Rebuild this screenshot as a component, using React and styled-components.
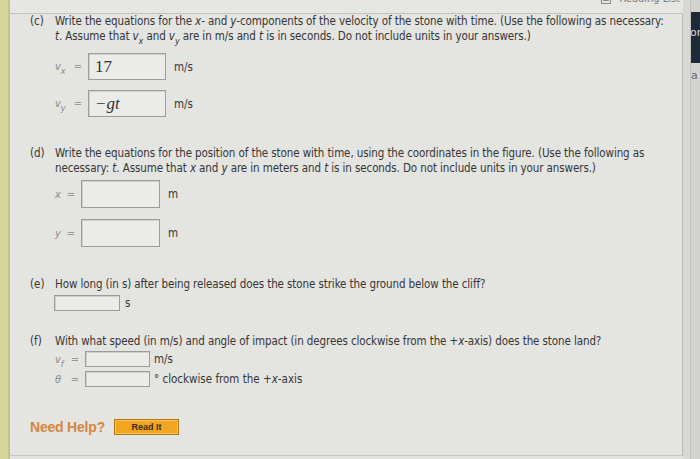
import React from "react";
import styled, { createGlobalStyle } from "styled-components";

const Global = createGlobalStyle`
  html, body { margin: 0; padding: 0; background: #e2e2df; }
  #root { width: 700px; height: 459px; }
`;

const Page = styled.div`
  display: flex;
  width: 700px;
  height: 459px;
  overflow: hidden;
  background: #e2e2df;
  font-family: "DejaVu Sans Condensed", "DejaVu Sans", sans-serif;
  color: #363636;
`;

const LeftStrip = styled.div`
  flex: none;
  width: 8px;
  background: #d6d59a;
  border-right: 2px solid #c4c389;
`;

const Center = styled.div`
  flex: none;
  width: 673px;
  display: flex;
  flex-direction: column;
  padding-bottom: 3px;
`;

const TopBar = styled.div`
  flex: none;
  height: 13px;
  overflow: hidden;
  display: flex;
  justify-content: flex-end;
  align-items: flex-end;
  padding-right: 3px;
  background: #e6e6e3;
`;

const ReadingList = styled.div`
  display: flex;
  align-items: center;
  gap: 8px;
  font-size: 11px;
  color: #7a7a78;
  margin-bottom: 8px;
  line-height: 12px;
`;

const Panel = styled.div`
  flex: 1;
  background: #e4e4e1;
  border-top: 1px solid #c2c2be;
  border-right: 1px solid #b9b9b5;
  border-bottom: 1px solid #c6c6c2;
  padding: 0 0 0 20px;
  display: flex;
  flex-direction: column;
`;

const Section = styled.div`
  display: flex;
  margin-top: ${(p) => p.$top}px;
`;

const PartLabel = styled.div`
  flex: none;
  width: 25px;
  font-size: 11.5px;
  line-height: 15px;
`;

const Body = styled.div`
  flex: 1;
  display: flex;
  flex-direction: column;
`;

const Question = styled.div`
  font-size: 11.5px;
  line-height: 15px;
  padding-right: 12px;
  letter-spacing: -0.1px;
  i { font-style: italic; }
  sub { font-size: 9px; font-style: italic; vertical-align: -4px; line-height: 0; }
`;

const Row = styled.div`
  display: flex;
  align-items: center;
  margin-top: ${(p) => p.$top}px;
  margin-left: ${(p) => p.$left || 0}px;
`;

const VarLabel = styled.div`
  flex: none;
  width: ${(p) => p.$w}px;
  display: flex;
  justify-content: space-between;
  padding-right: ${(p) => p.$pr || 6}px;
  box-sizing: border-box;
  font-size: 11px;
  color: #8a8a88;
  font-style: italic;
  sub { font-size: 9px; vertical-align: -4px; line-height: 0; }
`;

const Eq = styled.span`
  font-style: normal;
  color: #9a9a98;
`;

const Box = styled.div`
  flex: none;
  box-sizing: border-box;
  width: ${(p) => p.$w}px;
  height: ${(p) => p.$h}px;
  background: #ebebe9;
  border: 1px solid #9c9c9a;
  box-shadow: inset 1px 1px 0 #d0d0cd;
  display: flex;
  align-items: center;
  padding-left: 6px;
  font-family: "Liberation Serif", "DejaVu Serif", serif;
  font-size: 17px;
  color: #333;
`;

const Unit = styled.div`
  font-size: 11.5px;
  margin-left: ${(p) => p.$gap}px;
  color: #363636;
`;

const HelpRow = styled.div`
  display: flex;
  align-items: center;
  margin-top: 32px;
  gap: 9px;
`;

const NeedHelp = styled.div`
  font-family: "Liberation Sans", Arial, sans-serif;
  font-weight: bold;
  font-size: 14px;
  color: #d4873e;
  letter-spacing: -0.2px;
`;

const ReadIt = styled.button`
  width: 65px;
  height: 16px;
  padding: 0;
  background: #f1a521;
  border: 1px solid #b27516;
  box-shadow: inset 0 0 0 1px #f7c45a;
  font-family: "Liberation Sans", Arial, sans-serif;
  font-weight: bold;
  font-size: 9px;
  color: #3b2a10;
  cursor: pointer;
`;

const Gutter = styled.div`
  flex: none;
  width: 7px;
  background: #d8d8d4;
  border-right: 1px solid #c3c3bf;
`;

const RightEdge = styled.div`
  flex: none;
  width: 9px;
  display: flex;
  flex-direction: column;
  background: #d3d3cf;
  overflow: hidden;
`;

const NavyBlock = styled.div`
  margin-top: 12px;
  height: 51px;
  background: #1f2a38;
  color: #d8dde4;
  font-size: 11px;
  display: flex;
  align-items: center;
  white-space: nowrap;
  font-family: "DejaVu Sans", sans-serif;
  & span { margin-left: -1px; margin-top: -10px; }
`;

const EdgeText = styled.div`
  font-size: 11px;
  color: #6a6a68;
  margin-top: 6px;
  font-family: "DejaVu Sans", sans-serif;
`;

const ListIcon = () => (
  <svg width="10" height="9" viewBox="0 0 10 9">
    <rect x="0.5" y="0.5" width="9" height="8" fill="none" stroke="#8a8a88" />
    <line x1="2" y1="3" x2="8" y2="3" stroke="#8a8a88" />
    <line x1="2" y1="5.5" x2="8" y2="5.5" stroke="#8a8a88" />
  </svg>
);

export default function App() {
  return (
    <>
      <Global />
      <Page>
        <LeftStrip />
        <Center>
          <TopBar>
            <ReadingList>
              <ListIcon />
              <span>Reading List</span>
            </ReadingList>
          </TopBar>
          <Panel>
            <Section $top={0}>
              <PartLabel>(c)</PartLabel>
              <Body>
                <Question>
                  Write the equations for the <i>x</i>- and <i>y</i>-components of the velocity of the stone with time. (Use the following as necessary: <i>t</i>. Assume that <i>v</i><sub>x</sub> and <i>v</i><sub>y</sub> are in m/s and <i>t</i> is in seconds. Do not include units in your answers.)
                </Question>
                <Row $top={9}>
                  <VarLabel $w={33}>
                    <span>v<sub>x</sub></span>
                    <Eq>=</Eq>
                  </VarLabel>
                  <Box $w={78} $h={27}>17</Box>
                  <Unit $gap={8}>m/s</Unit>
                </Row>
                <Row $top={10}>
                  <VarLabel $w={33}>
                    <span>v<sub>y</sub></span>
                    <Eq>=</Eq>
                  </VarLabel>
                  <Box $w={78} $h={27}><i>−gt</i></Box>
                  <Unit $gap={8}>m/s</Unit>
                </Row>
              </Body>
            </Section>

            <Section $top={29}>
              <PartLabel>(d)</PartLabel>
              <Body>
                <Question>
                  Write the equations for the position of the stone with time, using the coordinates in the figure. (Use the following as necessary: <i>t</i>. Assume that <i>x</i> and <i>y</i> are in meters and <i>t</i> is in seconds. Do not include units in your answers.)
                </Question>
                <Row $top={4}>
                  <VarLabel $w={26}>
                    <span>x</span>
                    <Eq>=</Eq>
                  </VarLabel>
                  <Box $w={79} $h={28} />
                  <Unit $gap={8}>m</Unit>
                </Row>
                <Row $top={11}>
                  <VarLabel $w={26}>
                    <span>y</span>
                    <Eq>=</Eq>
                  </VarLabel>
                  <Box $w={79} $h={28} />
                  <Unit $gap={8}>m</Unit>
                </Row>
              </Body>
            </Section>

            <Section $top={30}>
              <PartLabel>(e)</PartLabel>
              <Body>
                <Question>
                  How long (in s) after being released does the stone strike the ground below the cliff?
                </Question>
                <Row $top={3} $left={-1}>
                  <Box $w={66} $h={16} />
                  <Unit $gap={5}>s</Unit>
                </Row>
              </Body>
            </Section>

            <Section $top={23}>
              <PartLabel>(f)</PartLabel>
              <Body>
                <Question>
                  With what speed (in m/s) and angle of impact (in degrees clockwise from the +<i>x</i>-axis) does the stone land?
                </Question>
                <Row $top={2}>
                  <VarLabel $w={30}>
                    <span>v<sub>f</sub></span>
                    <Eq>=</Eq>
                  </VarLabel>
                  <Box $w={65} $h={16} />
                  <Unit $gap={4}>m/s</Unit>
                </Row>
                <Row $top={4}>
                  <VarLabel $w={30}>
                    <span>θ</span>
                    <Eq>=</Eq>
                  </VarLabel>
                  <Box $w={65} $h={16} />
                  <Unit $gap={4}>° clockwise from the +<i>x</i>-axis</Unit>
                </Row>
              </Body>
            </Section>

            <HelpRow>
              <NeedHelp>Need Help?</NeedHelp>
              <ReadIt>Read It</ReadIt>
            </HelpRow>
          </Panel>
        </Center>
        <Gutter />
        <RightEdge>
          <NavyBlock><span>or</span></NavyBlock>
          <EdgeText>a</EdgeText>
        </RightEdge>
      </Page>
    </>
  );
}
